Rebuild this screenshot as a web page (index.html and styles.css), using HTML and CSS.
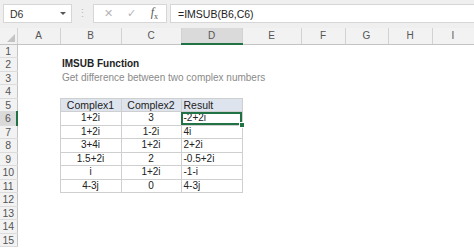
FILE: index.html
```html
<!DOCTYPE html>
<html lang="en">
<head>
  <meta charset="UTF-8">
  <title>IMSUB Function</title>
  <link rel="stylesheet" href="styles.css">
</head>
<body>

  <div class="toolbar">
    <div class="name-box">
      <span>D6</span>
      <span class="caret"></span>
    </div>
    <div class="grip">&#8942;</div>
    <div class="fx-buttons">
      <span class="btn-x">&#10005;</span>
      <span class="btn-ok">&#10003;</span>
      <span class="btn-fx"><i>f</i><sub>x</sub></span>
    </div>
    <div class="formula">=IMSUB(B6,C6)</div>
  </div>

  <table class="sheet">
    <colgroup>
      <col class="c-rh">
      <col class="c-a"><col class="c-b"><col class="c-c"><col class="c-d">
      <col class="c-e"><col class="c-f"><col class="c-g"><col class="c-h"><col class="c-i">
    </colgroup>
    <thead>
      <tr class="col-heads">
        <th class="corner"><span class="tri"></span></th>
        <th>A</th><th>B</th><th>C</th><th class="active">D</th>
        <th>E</th><th>F</th><th>G</th><th>H</th><th>I</th>
      </tr>
    </thead>
    <tbody>
      <tr><th>1</th><td></td><td></td><td></td><td></td><td></td><td></td><td></td><td></td><td></td></tr>
      <tr><th>2</th><td></td><td class="title">IMSUB Function</td><td></td><td></td><td></td><td></td><td></td><td></td><td></td></tr>
      <tr><th>3</th><td></td><td class="subtitle">Get difference between two complex numbers</td><td></td><td></td><td></td><td></td><td></td><td></td><td></td></tr>
      <tr><th>4</th><td></td><td></td><td></td><td></td><td></td><td></td><td></td><td></td><td></td></tr>
      <tr><th>5</th><td></td><td class="hd mid">Complex1</td><td class="hd mid">Complex2</td><td class="hd">Result</td><td></td><td></td><td></td><td></td><td></td></tr>
      <tr><th class="active">6</th><td></td><td class="box mid">1+2i</td><td class="box mid">3</td><td class="box sel">-2+2i<span class="handle"></span></td><td></td><td></td><td></td><td></td><td></td></tr>
      <tr><th>7</th><td></td><td class="box mid">1+2i</td><td class="box mid">1-2i</td><td class="box">4i</td><td></td><td></td><td></td><td></td><td></td></tr>
      <tr><th>8</th><td></td><td class="box mid">3+4i</td><td class="box mid">1+2i</td><td class="box">2+2i</td><td></td><td></td><td></td><td></td><td></td></tr>
      <tr><th>9</th><td></td><td class="box mid">1.5+2i</td><td class="box mid">2</td><td class="box">-0.5+2i</td><td></td><td></td><td></td><td></td><td></td></tr>
      <tr><th>10</th><td></td><td class="box mid">i</td><td class="box mid">1+2i</td><td class="box">-1-i</td><td></td><td></td><td></td><td></td><td></td></tr>
      <tr><th>11</th><td></td><td class="box mid">4-3j</td><td class="box mid">0</td><td class="box">4-3j</td><td></td><td></td><td></td><td></td><td></td></tr>
      <tr><th>12</th><td></td><td></td><td></td><td></td><td></td><td></td><td></td><td></td><td></td></tr>
      <tr><th>13</th><td></td><td></td><td></td><td></td><td></td><td></td><td></td><td></td><td></td></tr>
      <tr><th>14</th><td></td><td></td><td></td><td></td><td></td><td></td><td></td><td></td><td></td></tr>
      <tr><th>15</th><td></td><td></td><td></td><td></td><td></td><td></td><td></td><td></td><td></td></tr>
    </tbody>
  </table>

</body>
</html>
```

FILE: styles.css
```css
body {
  margin: 0;
  background: #fff;
  font-family: 'Liberation Sans', Arial, sans-serif;
  font-size: 10px;
  color: #222;
  overflow: hidden;
}

/* formula bar */
.toolbar {
  display: flex;
  align-items: center;
  height: 28px;
  padding: 4px 0 5px 3px;
  box-sizing: border-box;
  background: #efefef;
}
.name-box, .fx-buttons, .formula {
  height: 19px;
  background: #fff;
  border: 1px solid #d6d6d6;
  box-sizing: border-box;
  display: flex;
  align-items: center;
}
.name-box {
  width: 69px;
  padding: 0 5px 0 6px;
  justify-content: space-between;
  font-size: 10.5px;
  color: #333;
}
.caret {
  border-left: 3px solid transparent;
  border-right: 3px solid transparent;
  border-top: 3px solid #555;
}
.grip {
  width: 21px;
  text-align: center;
  color: #bbb;
  font-size: 11px;
}
.fx-buttons {
  width: 74px;
  padding: 0 8px 0 10px;
  justify-content: space-between;
  color: #b5b5b5;
  font-size: 11px;
}
.btn-fx {
  color: #555;
  font-family: 'Liberation Serif', serif;
  font-size: 12px;
}
.btn-fx sub {
  font-size: 8px;
}
.formula {
  flex: 1;
  margin-left: 3px;
  padding-left: 7px;
  border-right: none;
  font-size: 10.5px;
  color: #222;
}

/* grid */
.sheet {
  table-layout: fixed;
  border-collapse: collapse;
  width: 474px;
}
.c-rh { width: 17px; }
.c-a { width: 43px; }
.c-b { width: 61px; }
.c-c { width: 60px; }
.c-d { width: 61px; }
.c-e { width: 59px; }
.c-f { width: 44px; }
.c-g { width: 43px; }
.c-h { width: 44px; }
.c-i { width: 42px; }

.sheet th, .sheet td {
  padding: 0;
  height: 12.5px;
  line-height: 12px;
  white-space: nowrap;
  font-weight: normal;
}
.col-heads th {
  height: 15px;
  background: #f2f2f2;
  color: #555;
  text-align: center;
  border-right: 1px solid #d2d2d2;
  border-bottom: 1px solid #c4c4c4;
}
.col-heads th.active {
  background: #dadada;
  border-bottom: 2px solid #217346;
}
.corner {
  position: relative;
}
.tri {
  position: absolute;
  right: 2px;
  bottom: 2px;
  border-left: 8px solid transparent;
  border-bottom: 8px solid #c3c3c3;
}
tbody th {
  background: #f2f2f2;
  color: #555;
  font-size: 10.5px;
  text-align: center;
  border-right: 1px solid #c4c4c4;
  border-bottom: 1px solid #dcdcdc;
}
tbody th.active {
  background: #dadada;
  border-right: 2px solid #217346;
}

.title {
  font-weight: bold !important;
  padding-left: 2px !important;
}
.subtitle {
  color: #8a8a8a;
  padding-left: 2px !important;
}
.box, .hd {
  border: 1px solid #cfcfcf;
  padding-left: 2px !important;
}
.hd {
  background: #dde4ed;
  font-size: 10.5px;
}
.mid {
  text-align: center;
  padding-left: 0 !important;
}
.sel {
  position: relative;
  outline: 2px solid #217346;
  outline-offset: -2px;
}
.handle {
  position: absolute;
  right: -3px;
  bottom: -3px;
  width: 4px;
  height: 4px;
  background: #217346;
  border: 1px solid #fff;
}
```
